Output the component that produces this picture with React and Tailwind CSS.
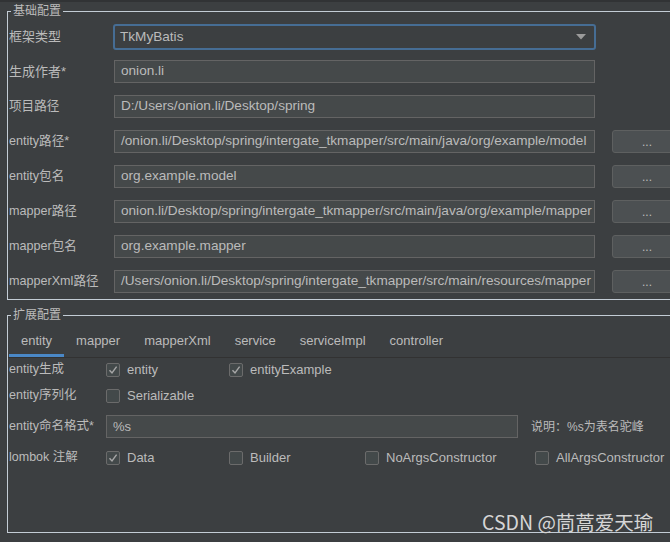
import React from "react";

const PATH_ROWS = [
  { label: "项目路径", value: "D:/Users/onion.li/Desktop/spring" },
  { label: "entity路径*", value: "/onion.li/Desktop/spring/intergate_tkmapper/src/main/java/org/example/model", button: true },
  { label: "entity包名", value: "org.example.model", button: true },
  { label: "mapper路径", value: "onion.li/Desktop/spring/intergate_tkmapper/src/main/java/org/example/mapper", button: true },
  { label: "mapper包名", value: "org.example.mapper", button: true },
  { label: "mapperXml路径", value: "/Users/onion.li/Desktop/spring/intergate_tkmapper/src/main/resources/mapper", button: true },
];

const TABS = ["entity", "mapper", "mapperXml", "service", "serviceImpl", "controller"];

function Field({ value, className = "" }) {
  return (
    <div className={`h-[23px] border border-[#646464] bg-[#45494a] flex items-center overflow-hidden px-[6px] ${className}`}>
      <span className="whitespace-nowrap text-[13.6px] text-[#bbbbbb]">{value}</span>
    </div>
  );
}

function Dots() {
  return (
    <button className="ml-[17px] w-[70px] h-[23px] rounded-[3px] border border-[#5e6060] bg-[#4c5052] text-[12px] text-[#bbbbbb] flex items-end justify-center pb-[4px] leading-none">
      ...
    </button>
  );
}

function Check({ checked, label, className = "" }) {
  return (
    <div className={`flex items-center gap-[7px] flex-shrink-0 ${className}`}>
      <div className="w-[14px] h-[14px] rounded-[2px] border border-[#6b6b6b] bg-[#43494a] flex items-center justify-center">
        {checked && (
          <svg width="10" height="10" viewBox="0 0 10 10">
            <path d="M1.5 5.2 L4 8 L8.6 1.6" fill="none" stroke="#a7a7a7" strokeWidth="1.4" />
          </svg>
        )}
      </div>
      <span className="text-[13px] text-[#bbbbbb]">{label}</span>
    </div>
  );
}

export default function App() {
  return (
    <div className="relative w-[670px] h-[542px] overflow-hidden bg-[#3c3f41] text-[#bbbbbb] font-['Liberation_Sans','Noto_Sans_CJK_SC',sans-serif]">
      <div className="h-[2px] bg-[#313335]" />

      <fieldset className="ml-[7px] w-[700px] border border-[#c3ccd5] pt-[4px] pb-[6px]">
        <legend className="ml-[3px] px-[2px] text-[12px] leading-[18px]">基础配置</legend>

        <div className="flex items-center h-[26px]">
          <div className="w-[106px] pl-[1px] text-[13px]">框架类型</div>
          <div className="-ml-[1px] w-[483px] h-[26px] rounded-[3px] border-2 border-[#466d94] flex items-center justify-between pl-[5px] pr-[8px]">
            <span className="text-[13.6px]">TkMyBatis</span>
            <svg width="10" height="6" viewBox="0 0 10 6">
              <path d="M0 0 H10 L5 5.5 Z" fill="#9b9b9b" />
            </svg>
          </div>
        </div>

        <div className="flex items-center mt-[10px]">
          <div className="w-[106px] pl-[1px] text-[13px]">生成作者*</div>
          <Field value="onion.li" className="w-[481px]" />
        </div>

        {PATH_ROWS.map((row) => (
          <div key={row.label} className="flex items-center mt-[12px]">
            <div className="w-[106px] pl-[1px] text-[12.6px] whitespace-nowrap">{row.label}</div>
            <Field value={row.value} className="w-[481px]" />
            {row.button && <Dots />}
          </div>
        ))}
      </fieldset>

      <fieldset className="mt-[7px] ml-[7px] w-[700px] border border-[#c3ccd5] pb-[63px]">
        <legend className="ml-[3px] px-[2px] text-[12px] leading-[16px]">扩展配置</legend>

        <div className="flex border-b border-[#323232] pl-[1px]">
          {TABS.map((tab, i) => (
            <div
              key={tab}
              className={`h-[34px] px-[12px] pt-[5px] flex items-center text-[13px] border-b-[3px] ${i === 0 ? "border-[#4a88c7]" : "border-transparent"}`}
            >
              {tab}
            </div>
          ))}
        </div>

        <div className="flex items-center h-[23px]">
          <div className="w-[98px] pl-[1px] text-[12.5px]">entity生成</div>
          <Check checked label="entity" className="w-[123px]" />
          <Check checked label="entityExample" />
        </div>

        <div className="flex items-center h-[23px] mt-[3px]">
          <div className="w-[98px] pl-[1px] text-[12.5px]">entity序列化</div>
          <Check label="Serializable" />
        </div>

        <div className="flex items-center mt-[8px]">
          <div className="w-[98px] pl-[1px] text-[12.5px] whitespace-nowrap">entity命名格式*</div>
          <div className="w-[412px] h-[23px] border border-[#646464] bg-[#45494a] flex items-center px-[6px] text-[13px]">%s</div>
          <span className="ml-[13px] text-[12px]">说明：%s为表名驼峰</span>
        </div>

        <div className="flex items-center h-[23px] mt-[8px]">
          <div className="w-[98px] pl-[1px] text-[12.5px]">lombok 注解</div>
          <Check checked label="Data" className="w-[123px]" />
          <Check label="Builder" className="w-[136px]" />
          <Check label="NoArgsConstructor" className="w-[170px]" />
          <Check label="AllArgsConstructor" />
        </div>
      </fieldset>

      <div className="absolute left-[482px] top-[507px] text-[19.5px] text-[#d6d6d6] font-['Noto_Sans_CJK_SC',sans-serif] whitespace-nowrap">
        CSDN @茼蒿爱天瑜
      </div>
    </div>
  );
}
